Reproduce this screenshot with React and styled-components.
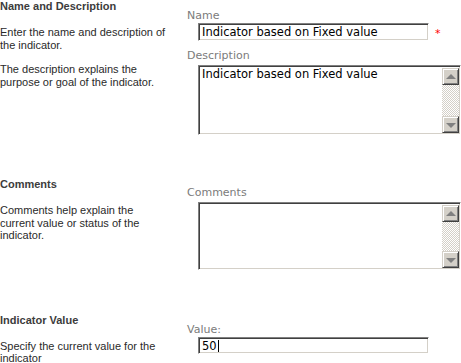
import React from 'react';
import styled, { createGlobalStyle } from 'styled-components';

const Global = createGlobalStyle`
  html, body { margin: 0; padding: 0; background: #fff; }
  body { width: 461px; height: 363px; overflow: hidden; }
`;

const Page = styled.div`
  display: flex;
  flex-direction: column;
`;

const Section = styled.section`
  display: grid;
  grid-template-columns: 187px 1fr;
  padding-bottom: ${(p) => p.$gap}px;
`;

const Info = styled.div`
  font-family: "Liberation Sans", Arial, sans-serif;
  font-size: 11px;
  line-height: 13px;
  color: #2a2a2a;
`;

const Heading = styled.h3`
  margin: 0 0 ${(p) => p.$gap || 13}px;
  font-size: 11px;
  line-height: 13px;
  font-weight: bold;
  color: #3c3c3c;
`;

const Desc = styled.p`
  margin: 0 0 11px;
  line-height: ${(p) => p.$lh || 13}px;
`;

const Fields = styled.div`
  padding-top: ${(p) => p.$top}px;
  font-family: "DejaVu Sans", Verdana, sans-serif;
  font-size: 11px;
  line-height: 13px;
`;

const Label = styled.div`
  color: #7b7b7b;
  margin-bottom: ${(p) => p.$gap}px;
`;

const Row = styled.div`
  display: flex;
  align-items: flex-start;
  margin-left: 11px;
  margin-bottom: ${(p) => p.$gap || 0}px;
`;

const inset = `
  box-sizing: border-box;
  border: 1px solid;
  border-color: #808080 #fff #fff #808080;
  box-shadow: inset 1px 1px 0 #404040, inset -1px -1px 0 #d4d0c8;
  background: #fff;
`;

const TextBox = styled.div`
  ${inset}
  width: 231px;
  height: ${(p) => p.$h}px;
  display: flex;
  align-items: center;
  padding: 1px 2px 0 3px;
  color: #000;
  font-size: 11.5px;
  line-height: 13px;
  white-space: nowrap;
`;

const Caret = styled.span`
  display: inline-block;
  width: 1px;
  height: 12px;
  background: #000;
  margin-left: 1px;
`;

const Required = styled.span`
  color: #f00;
  margin: 4px 0 0 6px;
  font-size: 11px;
`;

const AreaBox = styled.div`
  ${inset}
  width: 263px;
  height: ${(p) => p.$h}px;
  display: flex;
  padding: 2px 1px 1px 2px;
`;

const AreaText = styled.div`
  flex: 1;
  padding: 0 1px;
  color: #000;
  font-size: 11.5px;
  line-height: 13px;
`;

const Scrollbar = styled.div`
  width: 17px;
  display: flex;
  flex-direction: column;
`;

const ScrollButton = styled.div`
  box-sizing: border-box;
  height: 17px;
  background: #d4d0c8;
  border: 1px solid;
  border-color: #d4d0c8 #404040 #404040 #d4d0c8;
  box-shadow: inset 1px 1px 0 #fff, inset -1px -1px 0 #808080;
  display: flex;
  align-items: center;
  justify-content: center;
`;

const Arrow = styled.span`
  width: 0;
  height: 0;
  border-left: 5px solid transparent;
  border-right: 5px solid transparent;
  ${(p) =>
    p.$down
      ? 'border-top: 5px solid #808080; margin-top: 1px;'
      : 'border-bottom: 5px solid #808080; margin-top: -1px;'}
`;

const Track = styled.div`
  flex: 1;
  background: repeating-conic-gradient(#d4d0c8 0 25%, #fff 0 50%) 0 0 / 2px 2px;
`;

function TextArea({ h, children }) {
  return (
    <AreaBox $h={h}>
      <AreaText>{children}</AreaText>
      <Scrollbar>
        <ScrollButton><Arrow /></ScrollButton>
        <Track />
        <ScrollButton><Arrow $down /></ScrollButton>
      </Scrollbar>
    </AreaBox>
  );
}

export default function App() {
  return (
    <Page>
      <Global />
      <Section $gap={43}>
        <Info>
          <Heading>Name and Description</Heading>
          <Desc>Enter the name and description of<br />the indicator.</Desc>
          <Desc>The description explains the<br />purpose or goal of the indicator.</Desc>
        </Info>
        <Fields $top={9}>
          <Label $gap={1}>Name</Label>
          <Row $gap={8}>
            <TextBox $h={18}>Indicator based on Fixed value</TextBox>
            <Required>*</Required>
          </Row>
          <Label $gap={3}>Description</Label>
          <Row>
            <TextArea h={70}>Indicator based on Fixed value</TextArea>
          </Row>
        </Fields>
      </Section>
      <Section $gap={44}>
        <Info>
          <Heading>Comments</Heading>
          <Desc $lh={12.5}>Comments help explain the<br />current value or status of the<br />indicator.</Desc>
        </Info>
        <Fields $top={8}>
          <Label $gap={3}>Comments</Label>
          <Row>
            <TextArea h={68} />
          </Row>
        </Fields>
      </Section>
      <Section $gap={0}>
        <Info>
          <Heading $gap={13}>Indicator Value</Heading>
          <Desc $lh={12}>Specify the current value for the<br />indicator</Desc>
        </Info>
        <Fields $top={9}>
          <Label $gap={1}>Value:</Label>
          <Row>
            <TextBox $h={17}>50<Caret /></TextBox>
          </Row>
        </Fields>
      </Section>
    </Page>
  );
}
